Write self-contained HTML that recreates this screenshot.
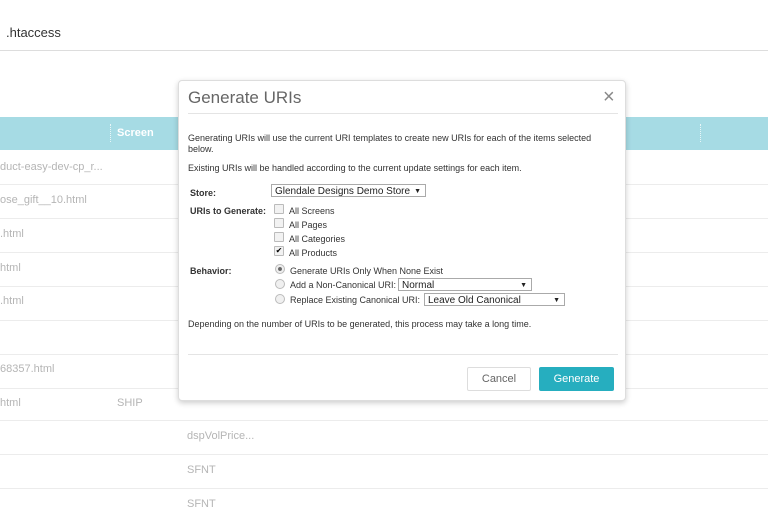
<!DOCTYPE html>
<html><head><style>
body{margin:0;width:768px;height:512px;background:#fff;font-family:"Liberation Sans",sans-serif;position:relative;overflow:hidden}
.a{position:absolute}
.row{position:absolute;left:0;width:768px;height:1px;background:#ececec}
.t{position:absolute;font-size:11px;color:#b5b5b5}
.m{font-size:9px;color:#333}
.cb{position:absolute;width:8px;height:8px;border:1px solid #bbb;background:#f2f2f2;border-radius:1px}
.rd{position:absolute;width:8px;height:8px;border:1px solid #bbb;background:#f0f0f0;border-radius:50%}
.sel{position:absolute;height:13px;border:1px solid #aaa;background:#fff;font-size:10px;color:#222;line-height:13px;padding-left:3px;box-sizing:border-box}
.sel span{position:absolute;right:4px;font-size:7px}
</style></head><body>
<div class="a" style="left:6px;top:25px;font-size:13px;color:#333">.htaccess</div>
<div class="row" style="top:50px;background:#ddd"></div>
<div class="a" style="left:0;top:117px;width:768px;height:33px;background:#a6dbe4"></div>
<div class="a" style="left:110px;top:124px;height:18px;border-left:1px dotted #e8f6f8"></div>
<div class="a" style="left:700px;top:124px;height:18px;border-left:1px dotted #e8f6f8"></div>
<div class="a" style="left:117px;top:127px;font-size:11px;font-weight:bold;color:#fff">Screen</div>
<div class="row" style="top:184px"></div><div class="row" style="top:218px"></div><div class="row" style="top:252px"></div><div class="row" style="top:286px"></div><div class="row" style="top:320px"></div><div class="row" style="top:354px"></div><div class="row" style="top:388px"></div><div class="row" style="top:420px"></div><div class="row" style="top:454px"></div><div class="row" style="top:488px"></div>
<div class="t" style="left:0;top:161px">duct-easy-dev-cp_r...</div>
<div class="t" style="left:0;top:194px">ose_gift__10.html</div>
<div class="t" style="left:0;top:228px">.html</div>
<div class="t" style="left:0;top:262px">html</div>
<div class="t" style="left:0;top:295px">.html</div>
<div class="t" style="left:0;top:363px">68357.html</div>
<div class="t" style="left:0;top:397px">html</div>
<div class="t" style="left:117px;top:397px">SHIP</div>
<div class="t" style="left:187px;top:430px">dspVolPrice...</div>
<div class="t" style="left:187px;top:464px">SFNT</div>
<div class="t" style="left:187px;top:498px">SFNT</div>

<div class="a" style="left:178px;top:80px;width:448px;height:321px;background:#fff;border:1px solid #ddd;border-radius:4px;box-shadow:0 2px 6px rgba(0,0,0,.2);box-sizing:border-box">
<div class="a" style="left:9px;top:7px;font-size:17px;color:#666">Generate URIs</div>
<div class="a" style="left:424px;top:5px;font-size:20px;color:#888">×</div>
<div class="a" style="left:9px;top:32px;width:430px;height:1px;background:#e4e4e4"></div>
<div class="a m" style="left:9px;top:52px;width:420px;line-height:11px">Generating URIs will use the current URI templates to create new URIs for each of the items selected below.</div>
<div class="a m" style="left:9px;top:82px">Existing URIs will be handled according to the current update settings for each item.</div>
<div class="a m" style="left:11px;top:107px;font-weight:bold">Store:</div>
<div class="sel" style="left:92px;top:103px;width:155px">Glendale Designs Demo Store<span>▼</span></div>
<div class="a m" style="left:11px;top:125px;font-weight:bold">URIs to Generate:</div>
<div class="cb" style="left:95px;top:123px"></div><div class="a m" style="left:110px;top:125px">All Screens</div>
<div class="cb" style="left:95px;top:137px"></div><div class="a m" style="left:110px;top:139px">All Pages</div>
<div class="cb" style="left:95px;top:151px"></div><div class="a m" style="left:110px;top:153px">All Categories</div>
<div class="cb" style="left:95px;top:165px;font-size:8px;line-height:8px;text-align:center">✔</div><div class="a m" style="left:110px;top:167px">All Products</div>
<div class="a m" style="left:11px;top:185px;font-weight:bold">Behavior:</div>
<div class="rd" style="left:96px;top:183px;background:radial-gradient(#666 30%,#eee 40%)"></div><div class="a m" style="left:111px;top:185px">Generate URIs Only When None Exist</div>
<div class="rd" style="left:96px;top:198px"></div><div class="a m" style="left:111px;top:199px">Add a Non-Canonical URI:</div>
<div class="sel" style="left:219px;top:197px;width:134px">Normal<span>▼</span></div>
<div class="rd" style="left:96px;top:213px"></div><div class="a m" style="left:111px;top:214px">Replace Existing Canonical URI:</div>
<div class="sel" style="left:245px;top:212px;width:141px">Leave Old Canonical<span>▼</span></div>
<div class="a m" style="left:9px;top:238px">Depending on the number of URIs to be generated, this process may take a long time.</div>
<div class="a" style="left:9px;top:273px;width:430px;height:1px;background:#e4e4e4"></div>
<div class="a" style="left:288px;top:286px;width:64px;height:24px;border:1px solid #ddd;border-radius:2px;box-sizing:border-box;font-size:11px;color:#666;text-align:center;line-height:22px">Cancel</div>
<div class="a" style="left:360px;top:286px;width:75px;height:24px;background:#26aebf;border-radius:2px;font-size:11px;color:#fff;text-align:center;line-height:24px">Generate</div>
</div>
</body></html>
